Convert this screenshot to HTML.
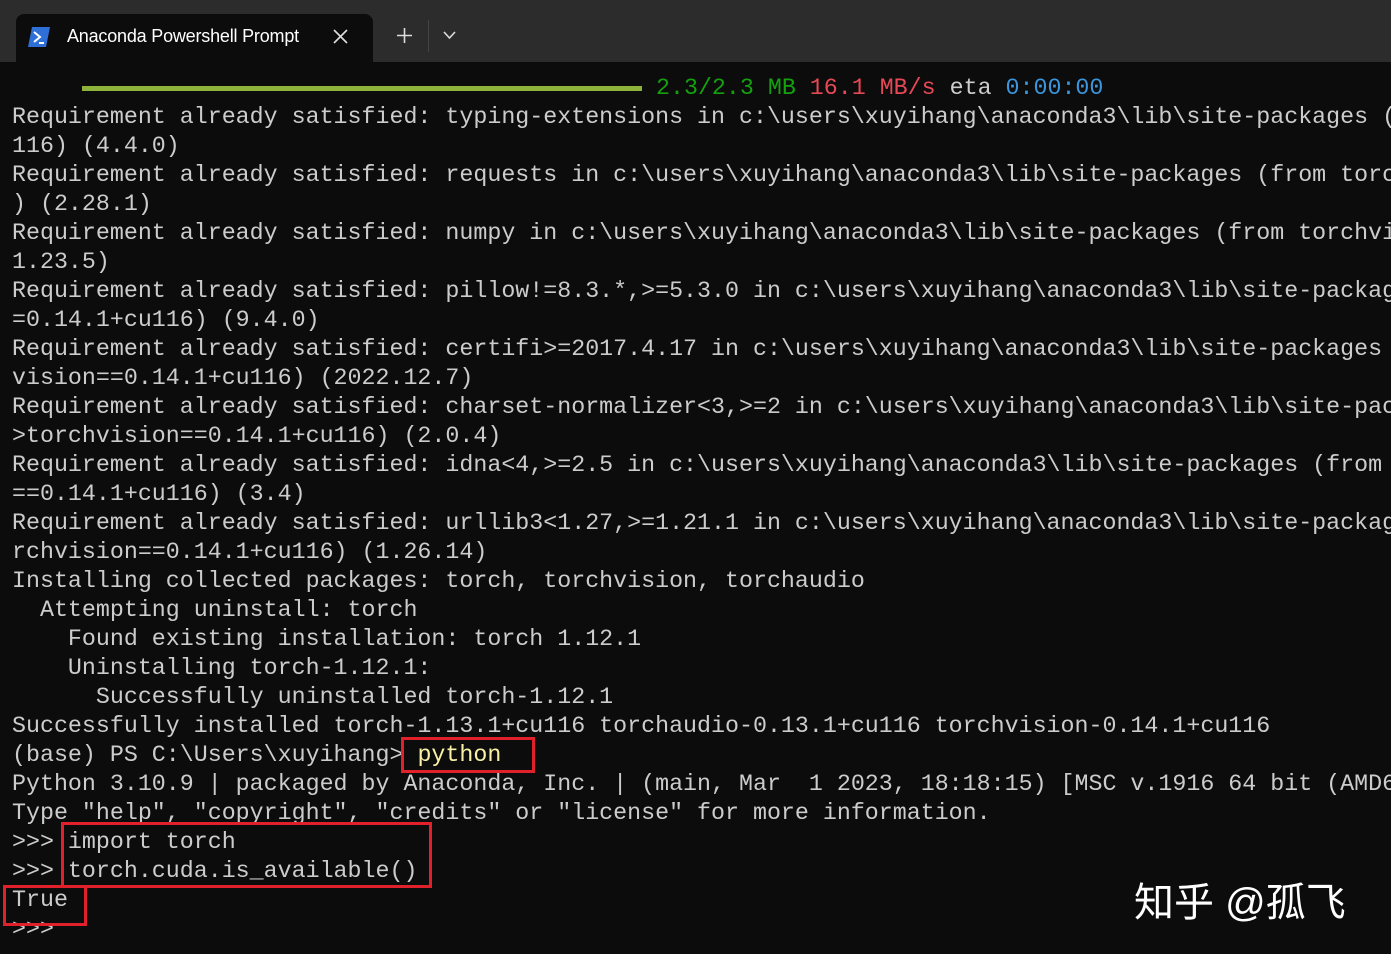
<!DOCTYPE html>
<html><head><meta charset="utf-8"><style>
body{margin:0;width:1391px;height:954px;background:#0c0c0c;overflow:hidden;position:relative;font-family:"Liberation Mono","DejaVu Sans Mono",monospace}
.bar{position:absolute;left:0;top:0;width:1391px;height:62px;background:#2c2c2c}
.tab{position:absolute;left:16px;top:14px;width:357px;height:48px;background:#0c0c0c;border-radius:8px 8px 0 0}
.tt{position:absolute;left:67px;top:26px;color:#fff;font:18px "Liberation Sans",sans-serif;letter-spacing:-0.2px}
.l{position:absolute;left:12px;font-size:23.3px;line-height:29px;color:#cccccc;white-space:pre}
.box{position:absolute;border:3px solid #e0202a;box-sizing:border-box}
</style></head><body>
<div class="bar"></div>
<div class="tab"></div>
<svg style="position:absolute;left:28px;top:27px" width="22" height="20"><polygon points="4,0 22,0 18,20 0,20" fill="#2f6fd8"/><path d="M6 5 L12 10 L6 15" stroke="#fff" stroke-width="2" fill="none"/><path d="M11 16 H16" stroke="#fff" stroke-width="2"/></svg>
<div class="tt">Anaconda Powershell Prompt</div>
<svg style="position:absolute;left:333px;top:29px" width="15" height="15"><path d="M1 1L14 14M14 1L1 14" stroke="#ddd" stroke-width="1.6"/></svg>
<svg style="position:absolute;left:396px;top:27px" width="17" height="17"><path d="M8.5 1V16M1 8.5H16" stroke="#ddd" stroke-width="1.6"/></svg>
<div style="position:absolute;left:428px;top:20px;width:1px;height:32px;background:#444"></div>
<svg style="position:absolute;left:443px;top:31px" width="13" height="9"><path d="M1 1L6.5 7L12 1" stroke="#ddd" stroke-width="1.6" fill="none"/></svg>
<div style="position:absolute;left:82px;top:86px;width:560px;height:5px;background:#8db33a"></div>
<div class="l" style="top:74px;left:656px"><span style="color:#13a10e">2.3/2.3 MB</span> <span style="color:#e74856">16.1 MB/s</span> eta <span style="color:#3a96dd">0:00:00</span></div>
<div class="l" style="top:103px">Requirement already satisfied: typing-extensions in c:\users\xuyihang\anaconda3\lib\site-packages (
116) (4.4.0)
Requirement already satisfied: requests in c:\users\xuyihang\anaconda3\lib\site-packages (from torc
) (2.28.1)
Requirement already satisfied: numpy in c:\users\xuyihang\anaconda3\lib\site-packages (from torchvi
1.23.5)
Requirement already satisfied: pillow!=8.3.*,>=5.3.0 in c:\users\xuyihang\anaconda3\lib\site-packag
=0.14.1+cu116) (9.4.0)
Requirement already satisfied: certifi>=2017.4.17 in c:\users\xuyihang\anaconda3\lib\site-packages 
vision==0.14.1+cu116) (2022.12.7)
Requirement already satisfied: charset-normalizer<3,>=2 in c:\users\xuyihang\anaconda3\lib\site-pac
>torchvision==0.14.1+cu116) (2.0.4)
Requirement already satisfied: idna<4,>=2.5 in c:\users\xuyihang\anaconda3\lib\site-packages (from 
==0.14.1+cu116) (3.4)
Requirement already satisfied: urllib3<1.27,>=1.21.1 in c:\users\xuyihang\anaconda3\lib\site-packag
rchvision==0.14.1+cu116) (1.26.14)
Installing collected packages: torch, torchvision, torchaudio
  Attempting uninstall: torch
    Found existing installation: torch 1.12.1
    Uninstalling torch-1.12.1:
      Successfully uninstalled torch-1.12.1
Successfully installed torch-1.13.1+cu116 torchaudio-0.13.1+cu116 torchvision-0.14.1+cu116
(base) PS C:\Users\xuyihang> <span style="color:#f9f1a5">python</span>
Python 3.10.9 | packaged by Anaconda, Inc. | (main, Mar  1 2023, 18:18:15) [MSC v.1916 64 bit (AMD6
Type "help", "copyright", "credits" or "license" for more information.
>>> import torch
>>> torch.cuda.is_available()
True
>>></div>
<div class="box" style="left:401px;top:737px;width:134px;height:36px"></div>
<div class="box" style="left:61px;top:822px;width:371px;height:66px"></div>
<div class="box" style="left:3px;top:885px;width:84px;height:41px"></div>
<div style="position:absolute;left:1134px;top:870px;color:#fff;font:40px 'Liberation Sans','Noto Sans CJK SC',sans-serif;white-space:nowrap">知乎 @孤飞</div>
</body></html>
